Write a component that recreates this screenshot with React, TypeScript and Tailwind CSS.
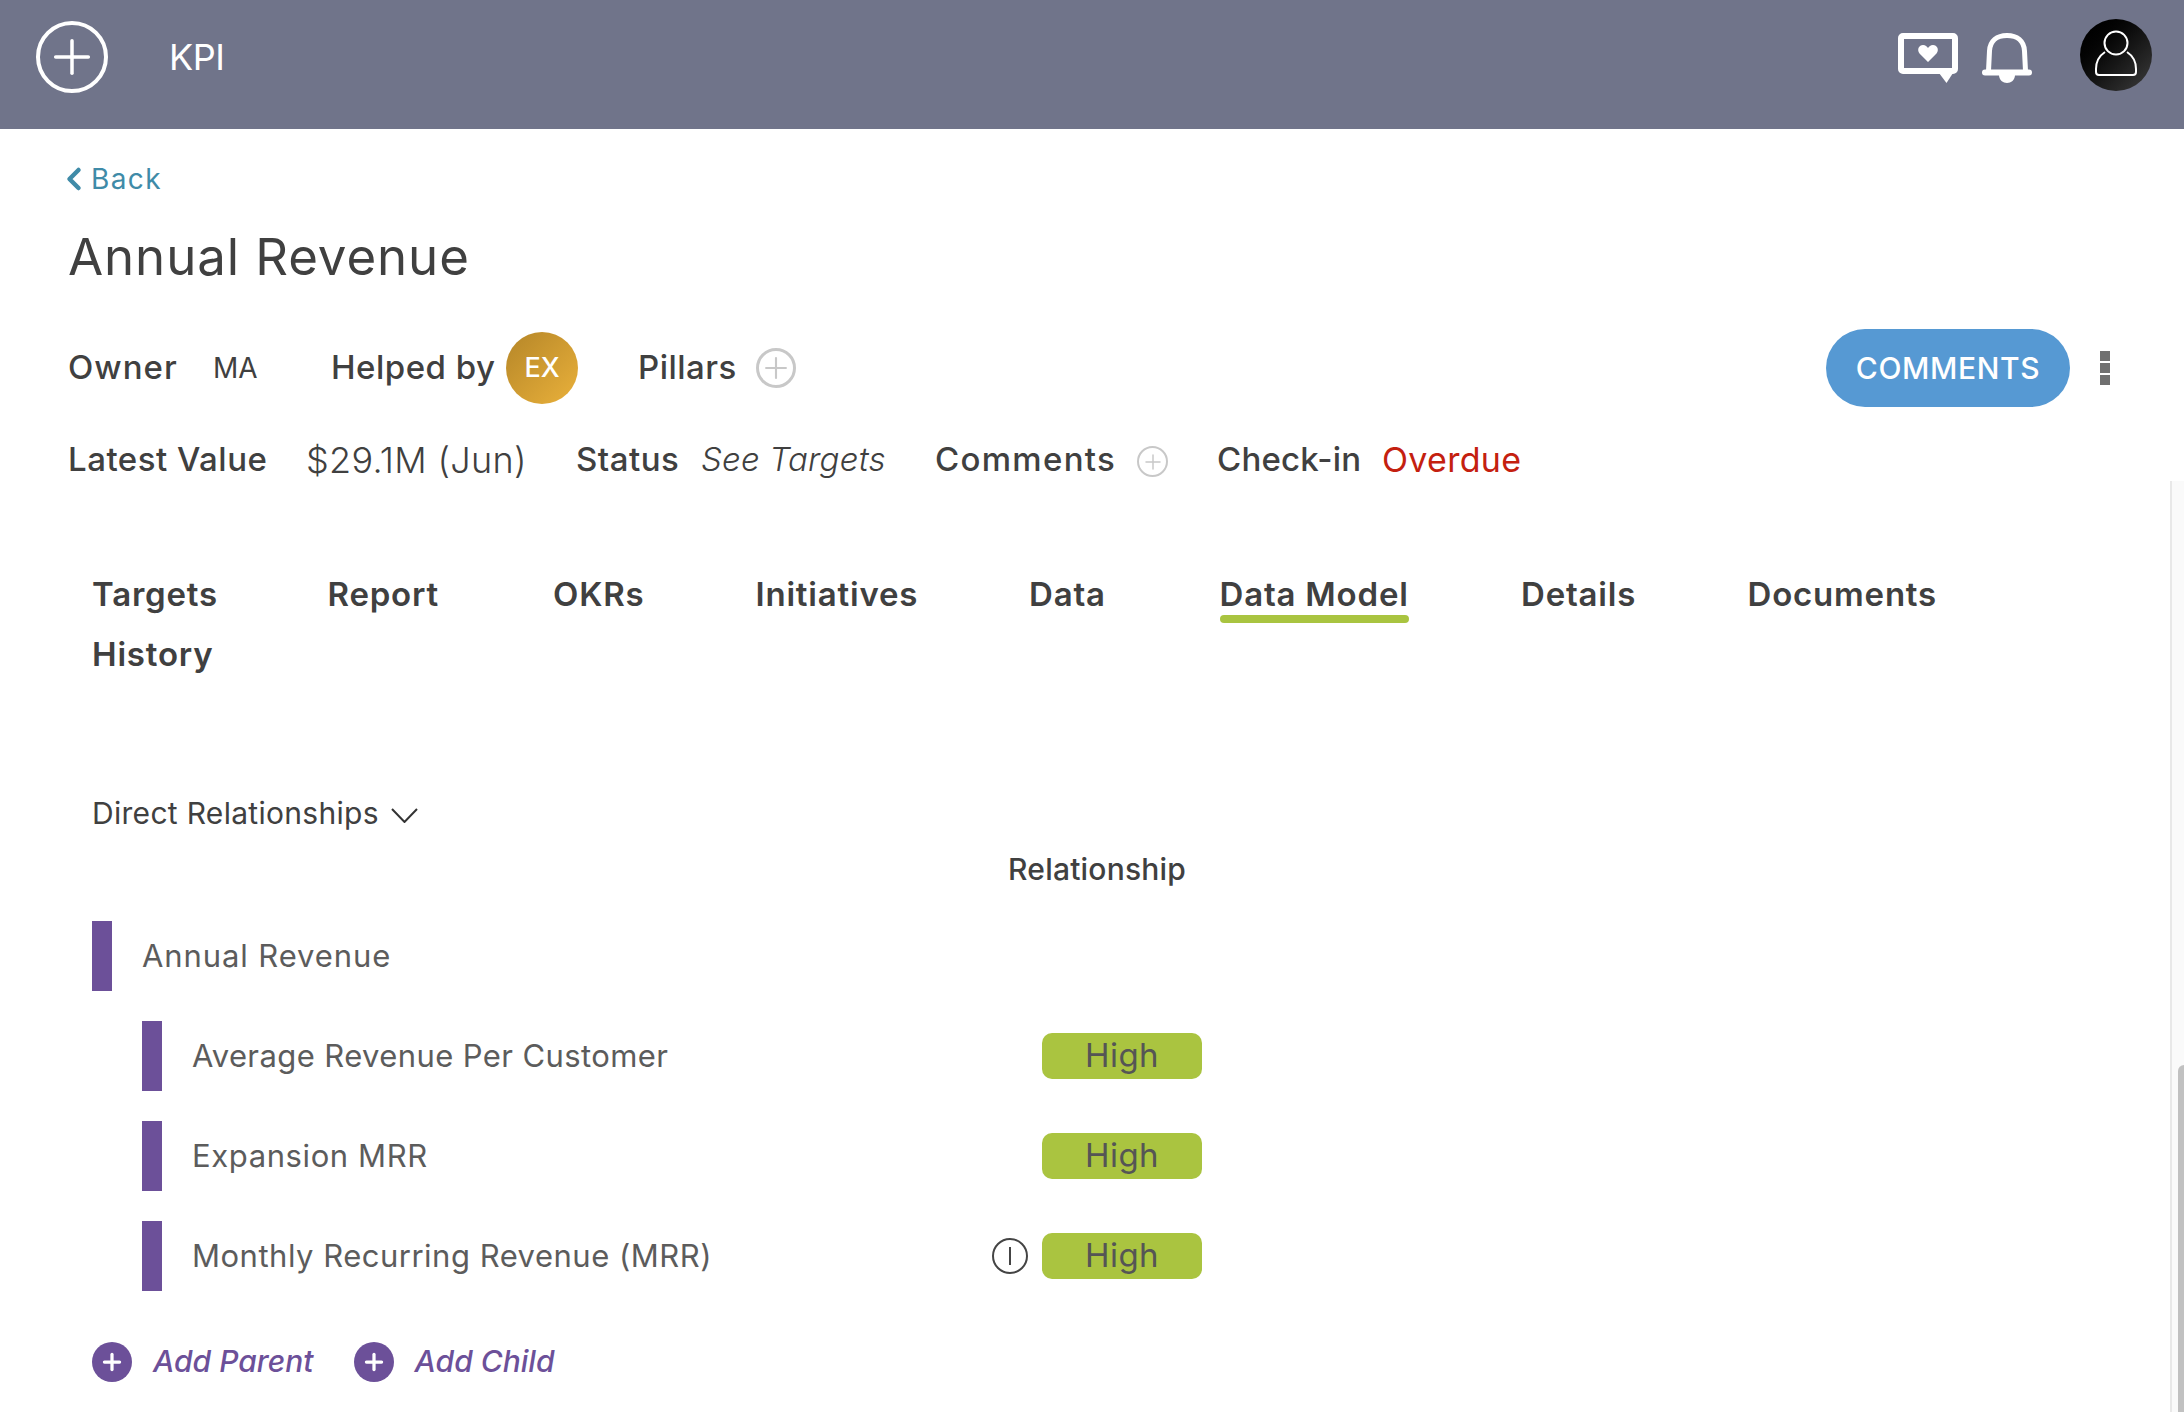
import { ChevronLeft, Plus } from "lucide-react";

const tabs = [
  { label: "Targets", width: "w-[123px]" },
  { label: "Report", width: "w-[113px]" },
  { label: "OKRs", width: "w-[90px]" },
  { label: "Initiatives", width: "w-[161px]" },
  { label: "Data", width: "w-[78px]" },
  { label: "Data Model", width: "w-[189px]", active: true },
  { label: "Details", width: "w-[114px]" },
  { label: "Documents", width: "w-[191px]" },
  { label: "History", width: "w-[118px]" },
];

const labelClass = "text-[33px] font-medium text-[#404040] whitespace-nowrap";

function CirclePlus({
  size,
  color,
  icon,
  strokeWidth,
}: {
  size: string;
  color: string;
  icon: number;
  strokeWidth: number;
}) {
  return (
    <span className={`flex shrink-0 items-center justify-center rounded-full ${size} ${color}`}>
      <Plus size={icon} strokeWidth={strokeWidth} />
    </span>
  );
}

function ChatHeart() {
  return (
    <svg width="60" height="50" viewBox="0 0 60 50" fill="none">
      <rect x="3" y="3" width="54" height="35" rx="2" stroke="white" strokeWidth="6" />
      <path d="M41 40 H55 L48.5 50 Z" fill="white" />
      <path
        d="M30 29 L21.5 20.5 C18.5 16.5 21 12 25 12 C27.5 12 29 13.5 30 15 C31 13.5 32.5 12 35 12 C39 12 41.5 16.5 38.5 20.5 Z"
        fill="white"
      />
    </svg>
  );
}

function Bell() {
  return (
    <svg width="50" height="50" viewBox="0 0 50 50" fill="none">
      <path
        d="M6.5 38 L7.5 18 C8 8 15 2.5 25 2.5 C35 2.5 42 8 42.5 18 L43.5 38"
        stroke="white"
        strokeWidth="5"
      />
      <path d="M3 39.5 H47" stroke="white" strokeWidth="6" strokeLinecap="round" />
      <path d="M17 42 H33 C33 47 29 50 25 50 C21 50 17 47 17 42 Z" fill="white" />
    </svg>
  );
}

function Avatar() {
  return (
    <div className="flex h-[72px] w-[72px] items-center justify-center rounded-full bg-linear-to-br from-[#000000] to-[#3e3e3e]">
      <svg width="72" height="72" viewBox="0 0 72 72" fill="none" stroke="white" strokeWidth="2">
        <circle cx="36" cy="24" r="11.5" />
        <path d="M25 33 C19 37 16 43 16 50 V53 Q16 56 19 56 H53 Q56 56 56 53 V50 C56 43 53 37 47 33" />
      </svg>
    </div>
  );
}

function Row({
  name,
  child,
  info,
  tracking = "tracking-[0.5px]",
}: {
  name: string;
  child?: boolean;
  info?: boolean;
  tracking?: string;
}) {
  return (
    <div className={`flex h-[70px] items-center ${child ? "pl-[50px]" : ""}`}>
      <div className="h-[70px] w-[20px] bg-[#6c5099]" />
      <span className={`ml-[30px] text-[31px] text-[#5c5c5c] whitespace-nowrap ${tracking}`}>{name}</span>
      {child && (
        <div className="ml-auto flex items-center">
          {info && (
            <span className="mr-[14px] flex h-[36px] w-[36px] items-center justify-center rounded-full border-2 border-[#444444]">
              <span className="h-[18px] w-[2px] bg-[#444444]" />
            </span>
          )}
          <span className="flex h-[46px] w-[160px] items-center justify-center rounded-[10px] bg-[#aac440] text-[33px] tracking-[0.4px] text-[#555555]">
            High
          </span>
        </div>
      )}
    </div>
  );
}

function AddLink({ label }: { label: string }) {
  return (
    <div className="flex items-center gap-[21px]">
      <span className="flex h-[40px] w-[40px] items-center justify-center rounded-full bg-[#6c5099] text-white">
        <Plus size={26} strokeWidth={3} />
      </span>
      <span className="text-[30px] font-medium italic text-[#6c5099]">{label}</span>
    </div>
  );
}

export default function App() {
  return (
    <div className="relative h-[1412px] overflow-hidden bg-white font-[Inter,sans-serif]">
      <header className="flex h-[129px] items-center bg-[#70748a] pb-[15px] pl-[36px] pr-[32px] text-white">
        <CirclePlus size="h-[72px] w-[72px] border-[4px]" color="border-white" icon={56} strokeWidth={1.5} />
        <span className="ml-[61px] text-[36px] tracking-[-0.5px]">KPI</span>
        <div className="ml-auto flex items-center">
          <span className="mt-[2px]">
            <ChatHeart />
          </span>
          <span className="ml-[24px] mt-[2px]">
            <Bell />
          </span>
          <span className="mb-[4px] ml-[48px]">
            <Avatar />
          </span>
        </div>
      </header>

      <main className="pl-[68px] pr-[74px]">
        <a className="mt-[30px] flex h-[40px] items-center text-[28px] tracking-[1.4px] text-[#3f8ba8]">
          <ChevronLeft className="ml-[-12px] mr-[-1px]" size={36} strokeWidth={3} />
          Back
        </a>

        <h1 className="mt-[28px] flex h-[60px] items-center text-[51px] tracking-[0.9px] text-[#404040]">
          Annual Revenue
        </h1>

        <div className="mt-[42px] flex h-[78px] items-center">
          <span className={`w-[109px] tracking-[1px] ${labelClass}`}>Owner</span>
          <span className="ml-[36px] w-[43px] text-[28px] text-[#404040]">MA</span>
          <span className={`ml-[75px] w-[165px] tracking-[0.5px] ${labelClass}`}>Helped by</span>
          <span className="ml-[10px] flex h-[72px] w-[72px] items-center justify-center rounded-full bg-linear-to-br from-[#b58628] to-[#eab13b] text-[27px] font-medium text-white">
            EX
          </span>
          <span className={`ml-[60px] w-[97px] tracking-[0.5px] ${labelClass}`}>Pillars</span>
          <span className="ml-[21px]">
            <CirclePlus
              size="h-[40px] w-[40px] border-[3px]"
              color="border-[#c8c8c8] text-[#c8c8c8]"
              icon={34}
              strokeWidth={1.5}
            />
          </span>
          <button className="ml-auto flex h-[78px] w-[244px] items-center justify-center rounded-full bg-[#5699d3] text-[30px] font-medium tracking-[0.6px] text-white">
            COMMENTS
          </button>
          <div className="ml-[30px] flex flex-col gap-[2px]">
            <span className="h-[10px] w-[10px] bg-[#707070]" />
            <span className="h-[10px] w-[10px] bg-[#707070]" />
            <span className="h-[10px] w-[10px] bg-[#707070]" />
          </div>
        </div>

        <div className="mt-[33px] flex h-[40px] items-center">
          <span className={`w-[198px] tracking-[0.5px] ${labelClass}`}>Latest Value</span>
          <span className="ml-[40px] w-[218px] text-[36px] font-light tracking-[0.3px] text-[#404040] whitespace-nowrap">
            $29.1M (Jun)
          </span>
          <span className={`ml-[52px] w-[103px] tracking-[0.5px] ${labelClass}`}>Status</span>
          <span className="ml-[22px] w-[185px] text-[33px] italic font-light tracking-[0.2px] text-[#404040] whitespace-nowrap">
            See Targets
          </span>
          <span className={`ml-[49px] w-[181px] tracking-[1.3px] ${labelClass}`}>Comments</span>
          <span className="ml-[21px] mt-[3px]">
            <CirclePlus
              size="h-[31px] w-[31px] border-2"
              color="border-[#c8c8c8] text-[#c8c8c8]"
              icon={24}
              strokeWidth={1.5}
            />
          </span>
          <span className={`ml-[49px] w-[144px] tracking-[0.2px] ${labelClass}`}>Check-in</span>
          <span className="mb-[2px] ml-[21px] text-[34px] tracking-[0.3px] text-[#c4200f]">Overdue</span>
        </div>

        <nav className="mt-[85px] flex flex-wrap gap-x-[112.5px] pl-[24px]">
          {tabs.map((tab) => (
            <span
              key={tab.label}
              className={`relative flex h-[60px] items-center text-[33px] font-semibold tracking-[0.8px] text-[#404040] whitespace-nowrap ${tab.width}`}
            >
              {tab.label}
              {tab.active && (
                <span className="absolute bottom-[2px] left-0 h-[8px] w-full rounded-full bg-[#a9c440]" />
              )}
            </span>
          ))}
        </nav>

        <section className="pl-[24px]">
          <div className="mt-[108px] flex h-[40px] items-center text-[30px] tracking-[0.3px] text-[#404040]">
            Direct Relationships
            <svg className="ml-[12px] mt-[4px]" width="27" height="15" viewBox="0 0 27 15" fill="none">
              <path d="M1 1 L13.5 14 L26 1" stroke="#333333" strokeWidth="2" />
            </svg>
          </div>

          <div className="w-[1110px]">
            <div className="mt-[16px] flex h-[40px] items-center justify-end pr-[16px] text-[30px] font-medium tracking-[0.2px] text-[#404040]">
              Relationship
            </div>
            <div className="mt-[32px] flex flex-col gap-[30px]">
              <Row name="Annual Revenue" tracking="tracking-[0.9px]" />
              <Row name="Average Revenue Per Customer" child tracking="tracking-[0.4px]" />
              <Row name="Expansion MRR" child tracking="tracking-[0.6px]" />
              <Row name="Monthly Recurring Revenue (MRR)" child info />
            </div>
          </div>

          <div className="mt-[48px] flex gap-[40px]">
            <AddLink label="Add Parent" />
            <AddLink label="Add Child" />
          </div>
        </section>
      </main>

      <div className="absolute bottom-0 right-0 top-[481px] w-[14px] border-l-2 border-[#e8e8e8] bg-[#fafafa]">
        <div className="absolute bottom-0 right-0 top-[584px] w-[6px] rounded-tl-[6px] bg-[#c1c1c1]" />
      </div>
    </div>
  );
}
